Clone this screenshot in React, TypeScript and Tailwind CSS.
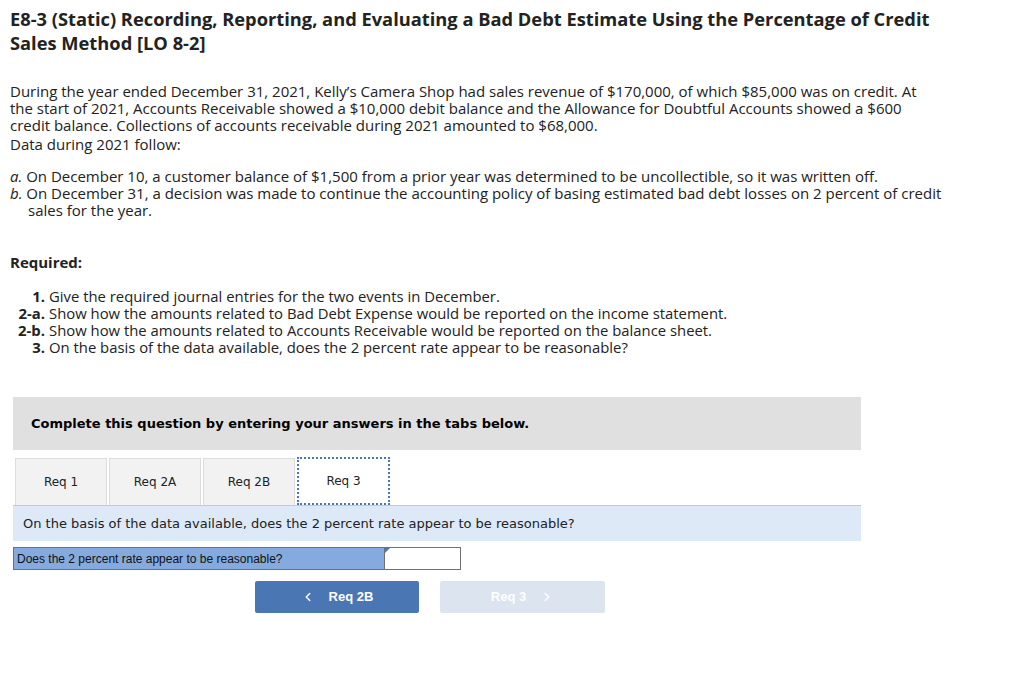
import { ChevronLeft, ChevronRight } from 'lucide-react';

const tabs = ['Req 1', 'Req 2A', 'Req 2B', 'Req 3'];

export default function App() {
  return (
    <div className="min-h-[700px] w-[1024px] bg-white text-[#222] [font-family:'Open_Sans',sans-serif]">
      <div className="px-[10px] pt-[7px]">
        <h1 className="whitespace-nowrap text-[18.3px] font-bold leading-[24px] text-[#222]">
          E8-3 (Static) Recording, Reporting, and Evaluating a Bad Debt Estimate Using the Percentage of Credit
          <br />
          Sales Method [LO 8-2]
        </h1>

        <div className="mt-[28px] whitespace-nowrap text-[15px] leading-[17px]">
          <p>
            During the year ended December 31, 2021, Kelly’s Camera Shop had sales revenue of $170,000, of which $85,000 was on credit. At
            <br />
            the start of 2021, Accounts Receivable showed a $10,000 debit balance and the Allowance for Doubtful Accounts showed a $600
            <br />
            credit balance. Collections of accounts receivable during 2021 amounted to $68,000.
          </p>
          <p className="mt-[2px]">Data during 2021 follow:</p>

          <ul className="mt-[15px]">
            <li className="pl-[18px] -indent-[18px]">
              <i>a.</i> On December 10, a customer balance of $1,500 from a prior year was determined to be uncollectible, so it was written off.
            </li>
            <li className="pl-[18px] -indent-[18px]">
              <i>b.</i> On December 31, a decision was made to continue the accounting policy of basing estimated bad debt losses on 2 percent of credit
              <br />
              sales for the year.
            </li>
          </ul>

          <p className="mt-[35px] font-bold">Required:</p>

          <div className="mt-[17px] grid grid-cols-[35px_1fr] gap-x-[4px] text-[14.85px]">
            <span className="text-right font-bold">1.</span>
            <span>Give the required journal entries for the two events in December.</span>
            <span className="text-right font-bold">2-a.</span>
            <span>Show how the amounts related to Bad Debt Expense would be reported on the income statement.</span>
            <span className="text-right font-bold">2-b.</span>
            <span>Show how the amounts related to Accounts Receivable would be reported on the balance sheet.</span>
            <span className="text-right font-bold">3.</span>
            <span>On the basis of the data available, does the 2 percent rate appear to be reasonable?</span>
          </div>
        </div>
      </div>

      <div className="ml-[13px] mt-[41px] w-[848px] [font-family:'DejaVu_Sans',Verdana,sans-serif]">
        <div className="flex h-[53px] items-center bg-[#e0e0e0] pl-[18px] text-[13px] font-bold text-black">
          Complete this question by entering your answers in the tabs below.
        </div>

        <div className="mt-[7px] flex items-end gap-[2px] border-b border-[#c8c8c8] pl-[2px]">
          {tabs.map((t, i) =>
            i === 3 ? (
              <div
                key={t}
                className="flex h-[48px] w-[93px] items-center justify-center border-2 border-dotted border-[#4a76c0] bg-white text-[12px] text-[#222]"
              >
                {t}
              </div>
            ) : (
              <div
                key={t}
                className="flex h-[47px] w-[92px] items-center justify-center border border-b-0 border-[#dcdcdc] bg-[#f2f2f2] text-[12px] text-[#222]"
              >
                {t}
              </div>
            ),
          )}
        </div>

        <div className="flex h-[35px] items-center bg-[#dde9f7] pl-[10px] text-[13px] text-[#222]">
          On the basis of the data available, does the 2 percent rate appear to be reasonable?
        </div>

        <div className="mt-[6px] flex h-[23px] w-[448px] border border-[#707070] [font-family:'Liberation_Sans',Arial,sans-serif]">
          <div className="flex w-[371px] items-center border-r border-[#707070] bg-[#84aadf] pl-[3px] text-[12px] text-[#111]">
            Does the 2 percent rate appear to be reasonable?
          </div>
          <div className="relative flex-1 bg-white">
            <span className="absolute left-0 top-0 h-0 w-0 border-l-[5px] border-b-[5px] border-l-[#4a76c0] border-b-transparent" />
          </div>
        </div>

        <div className="mt-[11px] flex gap-[21px] pl-[242px] [font-family:'Liberation_Sans',Arial,sans-serif]">
          <div className="flex h-[32px] w-[164px] items-center justify-center gap-[14px] rounded-[2px] bg-[#4a76b4] text-[13px] font-bold text-white">
            <ChevronLeft size={14} strokeWidth={2.5} />
            <span>Req 2B</span>
          </div>
          <div className="flex h-[32px] w-[165px] items-center justify-center gap-[14px] rounded-[2px] bg-[#dbe4ef] text-[13px] font-bold text-white">
            <span>Req 3</span>
            <ChevronRight size={14} strokeWidth={2.5} />
          </div>
        </div>
      </div>
    </div>
  );
}
